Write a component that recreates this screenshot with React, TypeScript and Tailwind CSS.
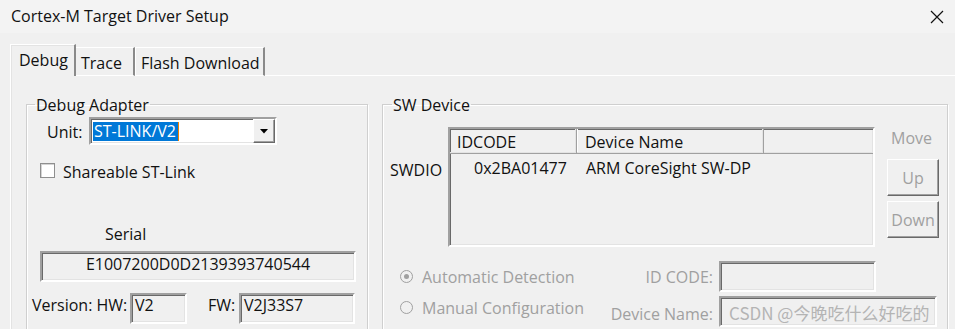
import React from "react";

const sunken =
  "border-2 border-t-[#a0a0a0] border-l-[#a0a0a0] border-b-[#ffffff] border-r-[#ffffff] shadow-[inset_1px_1px_0_#696969,inset_-1px_-1px_0_#e3e3e3]";
const raised =
  "border border-t-[#ffffff] border-l-[#ffffff] border-b-[#696969] border-r-[#696969] shadow-[inset_-1px_-1px_0_#a0a0a0]";
const group =
  "border border-[#cfcfcf] rounded-none shadow-[inset_1px_1px_0_#ffffff,1px_1px_0_#ffffff]";

export default function App() {
  return (
    <div
      className="w-[955px] h-[329px] overflow-hidden bg-[#f0f0f0] text-[16px] text-[#111] relative"
      style={{ fontFamily: '"Open Sans", "Noto Sans", "Noto Sans CJK SC", sans-serif' }}
    >
      {/* Title bar */}
      <div className="h-[33px] bg-[#f3f3f3] flex items-center justify-between pl-[11px] pr-[6px]">
        <span className="text-[16px] leading-[20px] mt-[-1px]">Cortex-M Target Driver Setup</span>
        <svg width="14" height="14" viewBox="0 0 14 14" className="mr-[5px]">
          <path d="M1 1 L13 13 M13 1 L1 13" stroke="#111" strokeWidth="1.2" />
        </svg>
      </div>

      {/* Tabs */}
      <div className="mt-[11px] ml-[10px] flex items-end h-[32px]">
        <div className="h-[32px] w-[66px] pl-[8px] pt-[5px] border-l border-t border-[#ffffff] border-r-[2px] border-r-[#8a8a8a] leading-[20px] bg-[#f0f0f0] shadow-[inset_1px_1px_0_#e3e3e3]">
          Debug
        </div>
        <div className="h-[29px] w-[59px] pl-[5px] pt-[5px] border-t border-[#ffffff] border-r-[2px] border-r-[#8a8a8a] leading-[20px] border-b border-b-[#ffffff]">
          Trace
        </div>
        <div className="h-[29px] w-[130px] pl-[5px] pt-[5px] border-t border-l border-[#ffffff] border-r-[2px] border-r-[#8a8a8a] leading-[20px] border-b border-b-[#ffffff] whitespace-nowrap">
          Flash Download
        </div>
        <div className="flex-1 border-b border-b-[#ffffff] h-px" />
      </div>

      {/* Tab panel */}
      <div className="ml-[10px] border-l border-[#ffffff] shadow-[inset_1px_0_0_#e3e3e3] flex pt-[18px] pl-[15px] h-[300px]">
        {/* Debug Adapter */}
        <fieldset className={`${group} w-[342px] h-[260px] px-0 pb-0 m-0`}>
          <legend className="ml-[8px] px-[1px] leading-[20px] pt-[1px]">Debug Adapter</legend>
          <div className="flex items-center mt-[2px] h-[28px]">
            <span className="ml-[20px] w-[42px] leading-[20px] mt-[2px]">Unit:</span>
            <div className={`${sunken} w-[188px] h-[28px] bg-white flex items-center justify-between`}>
              <span className="ml-[2px] bg-[#0078d7] text-white leading-[19px] px-[1px] pr-[2px] border-r border-r-[#f08000]">
                ST-LINK/V2
              </span>
              <div className={`${raised} w-[22px] h-[24px] bg-[#f0f0f0] flex items-center justify-center`}>
                <svg width="8" height="5" viewBox="0 0 8 5">
                  <path d="M0 0 H8 L4 4.5 Z" fill="#000" />
                </svg>
              </div>
            </div>
          </div>
          <div className="flex items-center mt-[17px] h-[17px]">
            <div className="ml-[13px] w-[15px] h-[15px] bg-white border border-[#8f8f8f] shadow-[inset_1px_1px_0_#d4d4d4]" />
            <span className="ml-[8px] leading-[20px] mt-[2px]">Shareable ST-Link</span>
          </div>
          <div className="mt-[45px] ml-[78px] leading-[20px]">Serial</div>
          <div className={`${sunken} mt-[7px] ml-[13px] w-[316px] h-[31px] flex justify-center leading-[20px] pt-[1px]`}>
            E1007200D0D2139393740544
          </div>
          <div className="flex items-start mt-[11px] h-[31px]">
            <span className="ml-[5px] w-[98px] leading-[20px] mt-[2px] whitespace-nowrap">Version: HW:</span>
            <div className={`${sunken} w-[57px] h-[31px] pl-[3px] leading-[20px]`}>V2</div>
            <span className="ml-[21px] w-[31px] leading-[20px] mt-[2px]">FW:</span>
            <div className={`${sunken} w-[116px] h-[31px] pl-[3px] leading-[20px]`}>V2J33S7</div>
          </div>
        </fieldset>

        {/* SW Device */}
        <fieldset className={`${group} ml-[14px] w-[566px] h-[260px] px-0 pb-0 m-0`}>
          <legend className="ml-[9px] px-[1px] leading-[20px] pt-[1px]">SW Device</legend>
          <div className="flex mt-[12px]">
            <span className="ml-[7px] w-[58px] mt-[33px] leading-[20px] h-[20px]">SWDIO</span>
            <div className={`${sunken} w-[427px] h-[120px] bg-[#f0f0f0]`}>
              <div className="flex h-[25px] leading-[20px]">
                <div className="w-[127px] pl-[7px] pt-[3px] border-r border-r-[#a0a0a0] border-b border-b-[#a0a0a0] shadow-[inset_-1px_-1px_0_#e3e3e3,1px_0_0_#ffffff]">IDCODE</div>
                <div className="w-[187px] pl-[8px] pt-[3px] border-r border-r-[#a0a0a0] border-b border-b-[#a0a0a0] shadow-[inset_-1px_-1px_0_#e3e3e3]">Device Name</div>
                <div className="flex-1 border-b border-b-[#a0a0a0] shadow-[inset_0_-1px_0_#e3e3e3]" />
              </div>
              <div className="flex leading-[20px] mt-[4px]">
                <span className="w-[127px] pl-[24px]">0x2BA01477</span>
                <span className="pl-[9px]">ARM CoreSight SW-DP</span>
              </div>
            </div>
            <div className="ml-[12px] flex flex-col text-[#a0a0a0]">
              <span className="mt-[1px] ml-[4px] leading-[20px]">Move</span>
              <div className={`${raised} mt-[11px] w-[52px] h-[37px] flex items-center justify-center leading-[20px]`}>Up</div>
              <div className={`${raised} mt-[5px] w-[52px] h-[37px] flex items-center justify-center leading-[20px]`}>Down</div>
            </div>
          </div>
          <div className="flex mt-[14px] text-[#a0a0a0]">
            <div className="flex flex-col">
              <div className="flex items-center h-[31px] ml-[17px]">
                <div className="w-[13px] h-[13px] rounded-full border border-[#a0a0a0] bg-[#f0f0f0] flex items-center justify-center">
                  <div className="w-[5px] h-[5px] rounded-full bg-[#a0a0a0]" />
                </div>
                <span className="ml-[9px] leading-[20px]">Automatic Detection</span>
              </div>
              <div className="flex items-center h-[31px] ml-[17px]">
                <div className="w-[13px] h-[13px] rounded-full border border-[#a0a0a0] bg-[#f0f0f0]" />
                <span className="ml-[9px] leading-[20px]">Manual Configuration</span>
              </div>
            </div>
            <div className="flex flex-col items-end ml-auto mr-[10px]">
              <div className="flex items-center h-[31px]">
                <span className="leading-[20px] mr-[6px]">ID CODE:</span>
                <div className={`${sunken} w-[157px] h-[31px]`} />
                <div className="w-[61px]" />
              </div>
              <div className="flex items-center h-[31px] mt-[4px]">
                <span className="leading-[20px] mr-[6px] mt-[4px]">Device Name:</span>
                <div className={`${sunken} w-[218px] h-[31px]`} />
              </div>
            </div>
          </div>
        </fieldset>
      </div>

      {/* Watermark overlay */}
      <div
        className="absolute left-[729px] top-[302px] text-[17px] leading-[22px] text-[#b4b4b4]"
        style={{ fontFamily: '"Noto Sans CJK SC", "Noto Sans", sans-serif' }}
      >
        CSDN @今晚吃什么好吃的
      </div>
    </div>
  );
}
